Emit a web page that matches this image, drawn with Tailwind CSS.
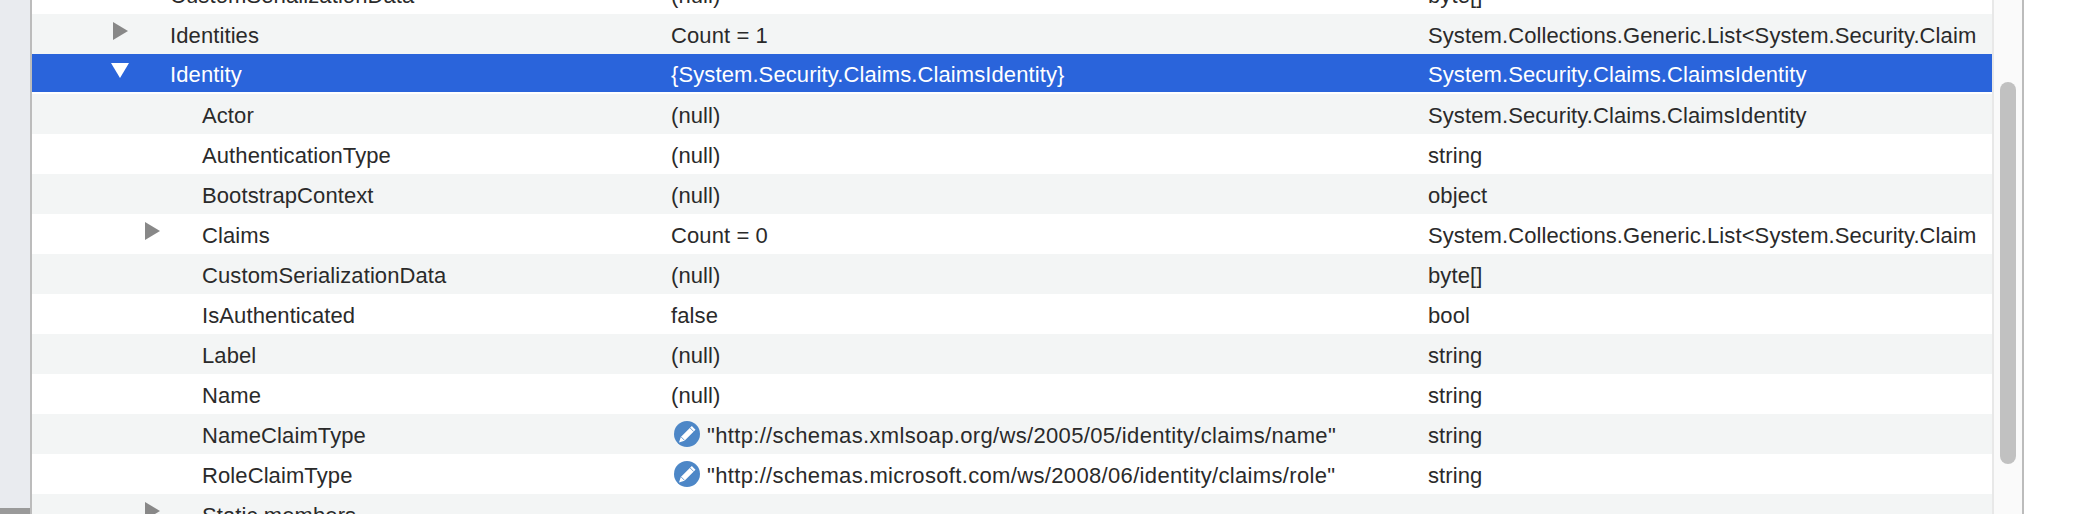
<!DOCTYPE html>
<html lang="en">
<head>
  <meta charset="UTF-8" />
  <title>Locals</title>
  <script src="https://cdn.jsdelivr.net/npm/@tailwindcss/browser@4"></script>
</head>
<body class="bg-white">
  <div class="flex h-[514px] w-[2074px] overflow-hidden font-['Liberation_Sans',Arial,sans-serif] text-[22px] tracking-[0.1px] text-[#2a2a2a]">
    <!-- Left pane -->
    <div class="relative w-[32px] shrink-0 bg-[#e9ebef] border-r-2 border-[#bcbcbc]">
      <div class="absolute left-0 bottom-0 h-[6px] w-[30px] bg-[#9a9a9a]"></div>
    </div>

    <!-- Tree rows -->
    <div class="w-[1960px] shrink-0 -mt-[26px]">
      <div class="flex h-[40px] items-center pt-[2px] bg-white">
        <div class="w-[138px] shrink-0"></div>
        <div class="w-[501px] shrink-0">CustomSerializationData</div>
        <div class="w-[757px] shrink-0">(null)</div>
        <div class="w-[548px] overflow-hidden whitespace-nowrap">byte[]</div>
      </div>
      <div class="flex h-[40px] items-center pt-[2px] bg-[#f3f5f5]">
        <div class="flex w-[138px] shrink-0 pl-[81px] pb-[8px]"><svg width="15" height="18" viewBox="0 0 15 18"><polygon points="0,0 15,9 0,18" fill="#888888"/></svg></div>
        <div class="w-[501px] shrink-0">Identities</div>
        <div class="w-[757px] shrink-0">Count = 1</div>
        <div class="w-[548px] overflow-hidden whitespace-nowrap">System.Collections.Generic.List&lt;System.Security.Claim</div>
      </div>
      <div class="flex h-[38px] items-center pt-[2px] bg-[#2a64db] text-white">
        <div class="flex w-[138px] shrink-0 pl-[79px] pb-[8px]"><svg width="18" height="15" viewBox="0 0 18 15"><polygon points="0,0 18,0 9,15" fill="#ffffff"/></svg></div>
        <div class="w-[501px] shrink-0">Identity</div>
        <div class="w-[757px] shrink-0">{System.Security.Claims.ClaimsIdentity}</div>
        <div class="w-[548px] overflow-hidden whitespace-nowrap">System.Security.Claims.ClaimsIdentity</div>
      </div>
      <div class="h-[2px] bg-white"></div>
      <div class="flex h-[40px] items-center pt-[2px] bg-[#f3f5f5]">
        <div class="w-[170px] shrink-0"></div>
        <div class="w-[469px] shrink-0">Actor</div>
        <div class="w-[757px] shrink-0">(null)</div>
        <div class="w-[548px] overflow-hidden whitespace-nowrap">System.Security.Claims.ClaimsIdentity</div>
      </div>
      <div class="flex h-[40px] items-center pt-[2px] bg-white">
        <div class="w-[170px] shrink-0"></div>
        <div class="w-[469px] shrink-0">AuthenticationType</div>
        <div class="w-[757px] shrink-0">(null)</div>
        <div class="w-[548px]">string</div>
      </div>
      <div class="flex h-[40px] items-center pt-[2px] bg-[#f3f5f5]">
        <div class="w-[170px] shrink-0"></div>
        <div class="w-[469px] shrink-0">BootstrapContext</div>
        <div class="w-[757px] shrink-0">(null)</div>
        <div class="w-[548px]">object</div>
      </div>
      <div class="flex h-[40px] items-center pt-[2px] bg-white">
        <div class="flex w-[170px] shrink-0 pl-[113px] pb-[8px]"><svg width="15" height="18" viewBox="0 0 15 18"><polygon points="0,0 15,9 0,18" fill="#888888"/></svg></div>
        <div class="w-[469px] shrink-0">Claims</div>
        <div class="w-[757px] shrink-0">Count = 0</div>
        <div class="w-[548px] overflow-hidden whitespace-nowrap">System.Collections.Generic.List&lt;System.Security.Claim</div>
      </div>
      <div class="flex h-[40px] items-center pt-[2px] bg-[#f3f5f5]">
        <div class="w-[170px] shrink-0"></div>
        <div class="w-[469px] shrink-0">CustomSerializationData</div>
        <div class="w-[757px] shrink-0">(null)</div>
        <div class="w-[548px]">byte[]</div>
      </div>
      <div class="flex h-[40px] items-center pt-[2px] bg-white">
        <div class="w-[170px] shrink-0"></div>
        <div class="w-[469px] shrink-0">IsAuthenticated</div>
        <div class="w-[757px] shrink-0">false</div>
        <div class="w-[548px]">bool</div>
      </div>
      <div class="flex h-[40px] items-center pt-[2px] bg-[#f3f5f5]">
        <div class="w-[170px] shrink-0"></div>
        <div class="w-[469px] shrink-0">Label</div>
        <div class="w-[757px] shrink-0">(null)</div>
        <div class="w-[548px]">string</div>
      </div>
      <div class="flex h-[40px] items-center pt-[2px] bg-white">
        <div class="w-[170px] shrink-0"></div>
        <div class="w-[469px] shrink-0">Name</div>
        <div class="w-[757px] shrink-0">(null)</div>
        <div class="w-[548px]">string</div>
      </div>
      <div class="flex h-[40px] items-center pt-[2px] bg-[#f3f5f5]">
        <div class="w-[170px] shrink-0"></div>
        <div class="w-[469px] shrink-0">NameClaimType</div>
        <div class="flex w-[757px] shrink-0 items-center gap-[7px]">
          <svg class="ml-[3px] mb-[2px]" width="26" height="26" viewBox="0 0 26 26"><circle cx="13" cy="13" r="13" fill="#4d87c7"/><path d="M5 21.5 L6.8 16 L17.8 5 L21.5 8.7 L10.5 19.7 Z" fill="#ffffff"/><path d="M16 6.8 L19.7 10.5 M7 15.8 L10.7 19.5" stroke="#4d87c7" stroke-width="0.8"/></svg>
          <span class="tracking-[0.34px]">"http://schemas.xmlsoap.org/ws/2005/05/identity/claims/name"</span>
        </div>
        <div class="w-[548px]">string</div>
      </div>
      <div class="flex h-[40px] items-center pt-[2px] bg-white">
        <div class="w-[170px] shrink-0"></div>
        <div class="w-[469px] shrink-0">RoleClaimType</div>
        <div class="flex w-[757px] shrink-0 items-center gap-[7px]">
          <svg class="ml-[3px] mb-[2px]" width="26" height="26" viewBox="0 0 26 26"><circle cx="13" cy="13" r="13" fill="#4d87c7"/><path d="M5 21.5 L6.8 16 L17.8 5 L21.5 8.7 L10.5 19.7 Z" fill="#ffffff"/><path d="M16 6.8 L19.7 10.5 M7 15.8 L10.7 19.5" stroke="#4d87c7" stroke-width="0.8"/></svg>
          <span class="tracking-[0.34px]">"http://schemas.microsoft.com/ws/2008/06/identity/claims/role"</span>
        </div>
        <div class="w-[548px]">string</div>
      </div>
      <div class="flex h-[40px] items-center pt-[2px] bg-[#f3f5f5]">
        <div class="flex w-[138px] shrink-0 pl-[113px] pb-[8px]"><svg width="15" height="18" viewBox="0 0 15 18"><polygon points="0,0 15,9 0,18" fill="#888888"/></svg></div>
        <div class="shrink-0 pl-[32px]">Static members</div>
      </div>
    </div>

    <!-- Scrollbar -->
    <div class="relative w-[32px] shrink-0 bg-[#fafafa] border-l-2 border-r-2 border-l-[#e8e8e8] border-r-[#bcbcbc]">
      <div class="absolute left-[6px] top-[82px] h-[382px] w-[16px] rounded-full bg-[#c1c1c1]"></div>
    </div>
  </div>
</body>
</html>
